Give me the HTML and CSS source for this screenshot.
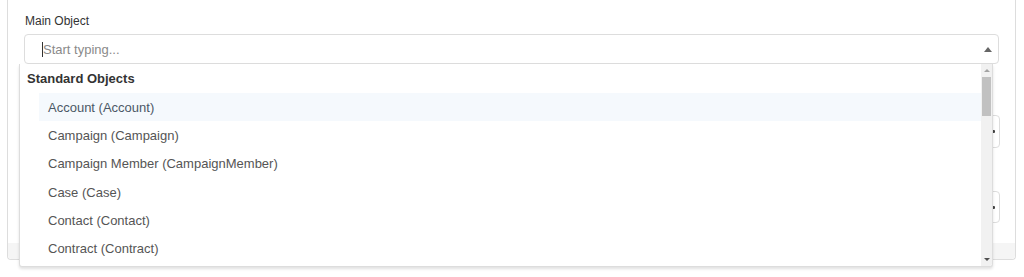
FILE: index.html
```html
<!DOCTYPE html>
<html>
<head>
<meta charset="utf-8">
<link rel="stylesheet" href="styles.css">
</head>
<body>
<div class="panel">
  <div class="panel-body">
    <div class="field">
      <label class="field-label">Main Object</label>
      <div class="combo">
        <span class="caret-line"></span><span class="placeholder">Start typing...</span>
        <span class="arrow-up"></span>
      </div>
    </div>
    <div class="field field-2">
      <div class="label-space"></div>
      <div class="select"><span class="dot"></span></div>
    </div>
    <div class="field field-3">
      <div class="label-space"></div>
      <div class="select select-3"><span class="dot"></span></div>
    </div>
  </div>
  <div class="panel-footer"></div>

  <div class="dropdown">
    <div class="list">
      <div class="group-label">Standard Objects</div>
      <ul class="options">
        <li class="option active">Account (Account)</li>
        <li class="option">Campaign (Campaign)</li>
        <li class="option">Campaign Member (CampaignMember)</li>
        <li class="option">Case (Case)</li>
        <li class="option">Contact (Contact)</li>
        <li class="option">Contract (Contract)</li>
      </ul>
    </div>
    <div class="scrollbar">
      <span class="sb-up"></span>
      <span class="sb-thumb"></span>
      <span class="sb-down"></span>
    </div>
  </div>
</div>
</body>
</html>
```

FILE: styles.css
```css
* { box-sizing: border-box; }
html, body { margin: 0; padding: 0; background: #fff; }
body {
  font-family: "Liberation Sans", Arial, sans-serif;
  font-size: 13px;
  color: #333;
  height: 277px;
  overflow: hidden;
  padding: 0 8px 0 7px;
}
.panel {
  position: relative;
  border: 1px solid #ddd;
  border-top: none;
  border-radius: 0 0 4px 4px;
}
.panel-body {
  padding: 13px 16px 20px 16px;
}
.field-label {
  display: block;
  font-size: 12px;
  line-height: 17px;
  margin-bottom: 4px;
  padding-left: 1px;
  color: #333;
}
.label-space {
  height: 17px;
  margin-bottom: 4px;
}
.combo {
  position: relative;
  height: 30px;
  border: 1px solid #ddd;
  border-radius: 4px;
  display: flex;
  align-items: center;
  padding-left: 17px;
  background: #fff;
}
.caret-line {
  display: inline-block;
  width: 1px;
  height: 15px;
  background: #333;
}
.placeholder {
  color: #8a8a8a;
  font-size: 13px;
  padding-top: 1px;
}
.arrow-up {
  position: absolute;
  right: 6px;
  top: 12px;
  width: 0; height: 0;
  border-left: 4.5px solid transparent;
  border-right: 4.5px solid transparent;
  border-bottom: 5px solid #666;
}
.field-2 { margin-top: 30px; }
.field-3 { margin-top: 22px; }
.select {
  position: relative;
  height: 33px;
  border: 1px solid #ddd;
  border-radius: 4px;
  margin-right: -1px;
}
.select-3 { height: 32px; }
.dot {
  position: absolute;
  right: 4px;
  top: 14px;
  width: 3px; height: 3px;
  background: #444;
  border-radius: 1px;
}
.panel-footer {
  height: 16px;
  background: #f5f5f5;
  border-radius: 0 0 4px 4px;
}
.dropdown {
  position: absolute;
  left: 11px;
  top: 64px;
  width: 974px;
  height: 203px;
  background: #fff;
  border: 1px solid #ddd;
  border-top: none;
  border-radius: 0 0 3px 3px;
  box-shadow: 0 2px 3px rgba(0,0,0,0.12);
  display: flex;
  overflow: hidden;
}
.list {
  flex: 1;
  overflow: hidden;
}
.group-label {
  font-weight: bold;
  padding: 7px 6px 0 7px;
  line-height: 16px;
  height: 29px;
  color: #333;
}
.options {
  list-style: none;
  margin: 0 0 0 19px;
  padding: 0;
}
.option {
  padding: 7px 8px 5px 9px;
  line-height: 16.2px;
  color: #555;
}
.option.active {
  background: #f5f9fd;
  color: #4b5866;
}
.scrollbar {
  position: relative;
  width: 11px;
  background: #f1f1f1;
  flex: none;
}
.sb-up {
  position: absolute;
  left: 3px;
  top: 5px;
  width: 0; height: 0;
  border-left: 3px solid transparent;
  border-right: 3px solid transparent;
  border-bottom: 3px solid #a3a3a3;
}
.sb-thumb {
  position: absolute;
  left: 1px;
  top: 13px;
  width: 9px;
  height: 39px;
  background: #c1c1c1;
}
.sb-down {
  position: absolute;
  left: 3px;
  bottom: 5px;
  width: 0; height: 0;
  border-left: 3px solid transparent;
  border-right: 3px solid transparent;
  border-top: 3px solid #505050;
}
```
